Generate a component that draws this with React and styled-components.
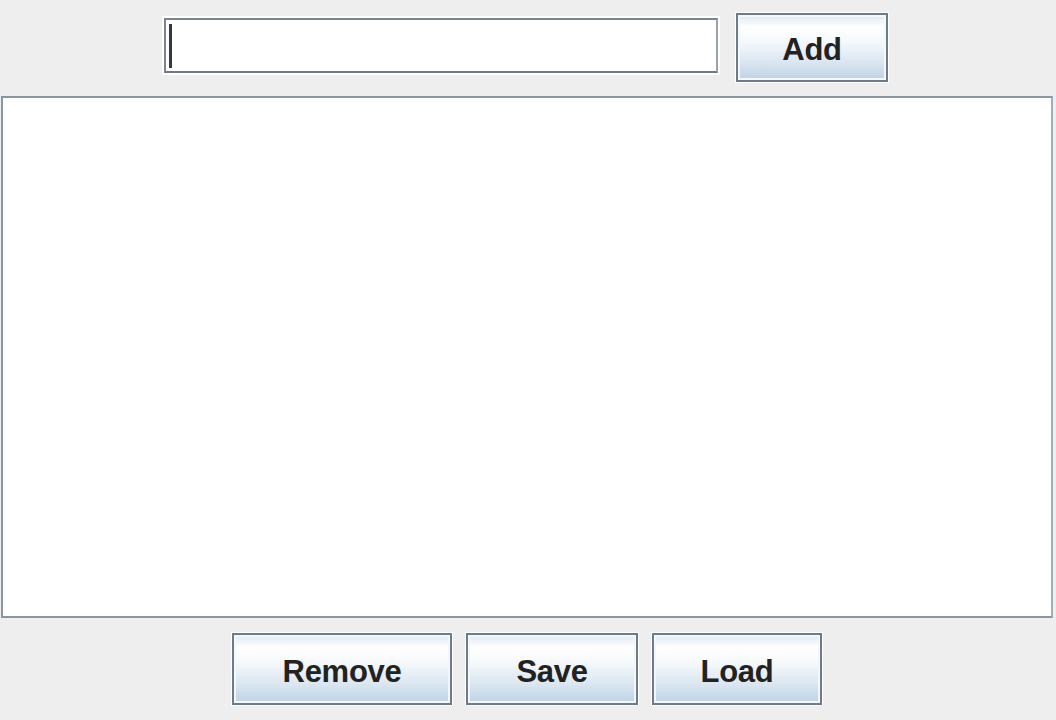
import React from "react";
import styled, { createGlobalStyle } from "styled-components";

const Global = createGlobalStyle`
  html, body { margin: 0; padding: 0; background: #eeeeee; }
  body { font-family: "Liberation Sans", Arial, sans-serif; }
`;

const Frame = styled.div`
  width: 1056px;
  height: 720px;
  background: #eeeeee;
  display: flex;
  flex-direction: column;
  box-sizing: border-box;
  overflow: hidden;
`;

const Row = styled.div`
  display: flex;
  justify-content: center;
  align-items: center;
  gap: ${(p) => p.$gap}px;
  padding-top: ${(p) => p.$top}px;
  padding-right: ${(p) => p.$right || 0}px;
`;

const Field = styled.div`
  width: 554px;
  height: 55px;
  box-sizing: border-box;
  background: #ffffff;
  border: 2px solid #7a8490;
  border-right-color: #9aa3ad;
  border-bottom-color: #6f7a86;
  box-shadow: 0 0 0 2px #ffffff;
  display: flex;
  align-items: center;
  padding-left: 3px;
  margin-bottom: 4px;
`;

const Caret = styled.span`
  width: 3px;
  height: 44px;
  background: #333a40;
`;

const Button = styled.button`
  width: ${(p) => p.$w}px;
  height: ${(p) => p.$h}px;
  box-sizing: border-box;
  border: 2px solid #6e7c8a;
  box-shadow: inset 0 0 0 2px #f4f8fc, 0 0 0 1px #ffffff;
  background: linear-gradient(
    to bottom,
    #dde8f3 0%,
    #ffffff 18%,
    #f6f9fc 40%,
    #dbe6f1 72%,
    #bdd2e6 100%
  );
  font-family: "Liberation Sans", Arial, sans-serif;
  font-weight: bold;
  font-size: 31px;
  color: #222222;
  padding: 0;
  padding-top: 5px;
  letter-spacing: -0.3px;
  cursor: default;
`;

const List = styled.div`
  margin-top: 14px;
  margin-left: 1px;
  width: 1052px;
  height: 522px;
  box-sizing: border-box;
  background: #ffffff;
  border: 2px solid #8a96a2;
  border-right-color: #a3adb7;
`;

export default function App() {
  return (
    <Frame>
      <Global />
      <Row $gap={18} $top={13} $right={4}>
        <Field>
          <Caret />
        </Field>
        <Button $w={152} $h={69}>Add</Button>
      </Row>
      <List />
      <Row $gap={14} $top={15} $right={2}>
        <Button $w={220} $h={72}>Remove</Button>
        <Button $w={172} $h={72}>Save</Button>
        <Button $w={170} $h={72}>Load</Button>
      </Row>
    </Frame>
  );
}
